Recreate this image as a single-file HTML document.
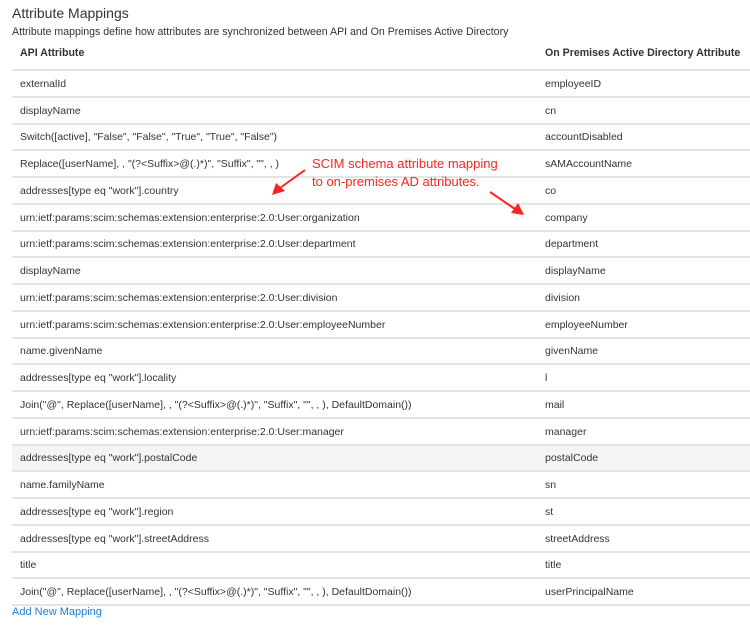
<!DOCTYPE html>
<html><head><style>
body{margin:0;width:750px;height:627px;background:#fff;font-family:"Segoe UI","Liberation Sans",sans-serif;color:#222;position:relative;overflow:hidden}
.t{position:absolute;left:12px;top:5px;font-size:14px;color:#333}
.s{position:absolute;left:12px;top:26px;font-size:10.6px;color:#333}
.h{position:absolute;top:47px;font-size:10.6px;font-weight:bold;color:#333}
table{position:absolute;left:12px;top:69px;width:738px;border-collapse:collapse;font-size:10.5px}
td{height:26.75px;border-top:2px solid #e4e4e4;padding:1px 0 0 8px;color:#333;white-space:nowrap;box-sizing:border-box}
td.b{padding-left:0;width:205px}
tr.hv td{background:#f4f4f4}
tr:last-child td{border-bottom:2px solid #e4e4e4}
.a{position:absolute;left:12px;top:606px;font-size:11px;color:#1a7fd8}
.r{position:absolute;left:312px;font-size:13px;color:#f22}
</style></head><body>
<div class="t">Attribute Mappings</div>
<div class="s">Attribute mappings define how attributes are synchronized between API and On Premises Active Directory</div>
<div class="h" style="left:20px">API Attribute</div>
<div class="h" style="left:545px">On Premises Active Directory Attribute</div>
<table>
<tr><td>externalId</td><td class="b">employeeID</td></tr>
<tr><td>displayName</td><td class="b">cn</td></tr>
<tr><td>Switch([active], "False", "False", "True", "True", "False")</td><td class="b">accountDisabled</td></tr>
<tr><td>Replace([userName], , "(?&lt;Suffix&gt;@(.)*)", "Suffix", "", , )</td><td class="b">sAMAccountName</td></tr>
<tr><td>addresses[type eq "work"].country</td><td class="b">co</td></tr>
<tr><td>urn:ietf:params:scim:schemas:extension:enterprise:2.0:User:organization</td><td class="b">company</td></tr>
<tr><td>urn:ietf:params:scim:schemas:extension:enterprise:2.0:User:department</td><td class="b">department</td></tr>
<tr><td>displayName</td><td class="b">displayName</td></tr>
<tr><td>urn:ietf:params:scim:schemas:extension:enterprise:2.0:User:division</td><td class="b">division</td></tr>
<tr><td>urn:ietf:params:scim:schemas:extension:enterprise:2.0:User:employeeNumber</td><td class="b">employeeNumber</td></tr>
<tr><td>name.givenName</td><td class="b">givenName</td></tr>
<tr><td>addresses[type eq "work"].locality</td><td class="b">l</td></tr>
<tr><td>Join("@", Replace([userName], , "(?&lt;Suffix&gt;@(.)*)", "Suffix", "", , ), DefaultDomain())</td><td class="b">mail</td></tr>
<tr><td>urn:ietf:params:scim:schemas:extension:enterprise:2.0:User:manager</td><td class="b">manager</td></tr>
<tr class="hv"><td>addresses[type eq "work"].postalCode</td><td class="b">postalCode</td></tr>
<tr><td>name.familyName</td><td class="b">sn</td></tr>
<tr><td>addresses[type eq "work"].region</td><td class="b">st</td></tr>
<tr><td>addresses[type eq "work"].streetAddress</td><td class="b">streetAddress</td></tr>
<tr><td>title</td><td class="b">title</td></tr>
<tr><td>Join("@", Replace([userName], , "(?&lt;Suffix&gt;@(.)*)", "Suffix", "", , ), DefaultDomain())</td><td class="b">userPrincipalName</td></tr>
</table>
<div class="r" style="top:156px">SCIM schema attribute mapping</div>
<div class="r" style="top:174px">to on-premises AD attributes.</div>
<svg style="position:absolute;left:0;top:0" width="750" height="627">
<g stroke="#f22" stroke-width="2" fill="#f22">
<line x1="305" y1="170" x2="280" y2="188"/>
<polygon points="272,195 276,183 285,191" stroke="none"/>
<line x1="490" y1="192" x2="515" y2="209"/>
<polygon points="524,215 511,213 518,203" stroke="none"/>
</g></svg>
<div class="a">Add New Mapping</div>
</body></html>
